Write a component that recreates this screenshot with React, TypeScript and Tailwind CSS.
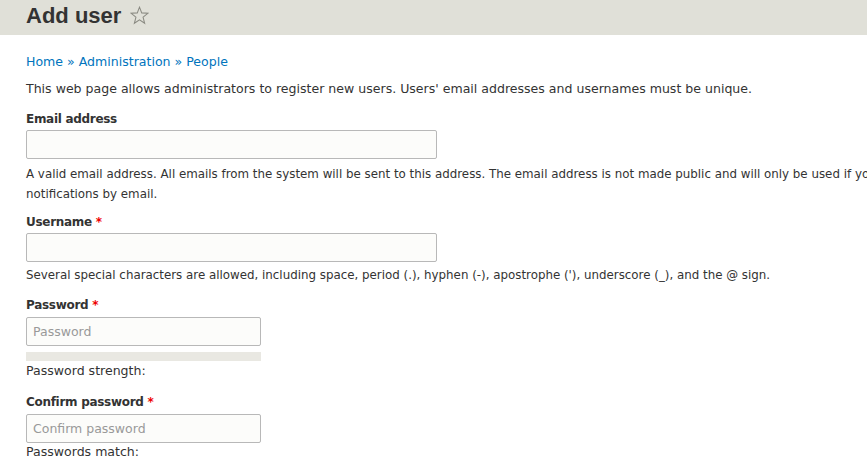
import { Fragment } from 'react'

const font = { fontFamily: '"DejaVu Sans", Verdana, sans-serif' }
const titleFont = { fontFamily: '"Liberation Sans", Arial, sans-serif' }

const Req = () => <span className="ml-[4px] text-[#e00]">*</span>

function TextInput({ width, placeholder }: { width: string; placeholder?: string }) {
    return (
        <input
            type="text"
            placeholder={placeholder}
            className={`${width} h-[29px] rounded-[2px] border border-[#b8b8b8] bg-[#fcfcfa] px-[6px] text-[12.5px] text-[#333] placeholder:text-[#999] outline-none`}
            style={font}
        />
    )
}

function Label({ children }: { children: React.ReactNode }) {
    return <label className="block text-[12px] font-bold leading-[18px] tracking-[-0.3px]">{children}</label>
}

export default function App() {
    return (
        <div className="min-h-screen w-full overflow-hidden bg-white text-[12.55px] text-[#333]" style={font}>
            <div className="flex h-[35px] items-center bg-[#e0e0d8] px-[26px]">
                <h1 className="-mt-[3px] text-[22px] font-bold leading-none text-[#333]" style={titleFont}>Add user</h1>
                <svg className="-mt-[5px] ml-[9px]" width="19" height="19" viewBox="0 0 24 24" fill="none" stroke="#8a8a82" strokeWidth="1.3">
                    <polygon points="12,1.5 14.8,8.7 22.5,9.2 16.5,14.1 18.5,21.8 12,17.5 5.5,21.8 7.5,14.1 1.5,9.2 9.2,8.7" />
                </svg>
            </div>

            <div className="w-[1100px] px-[26px]">
                <nav className="mt-[18px] leading-[18px] text-[#0074bd]">
                    {['Home', 'Administration', 'People'].map((crumb, i) => (
                        <Fragment key={crumb}>
                            {i > 0 && <span> » </span>}
                            <a href="#" className="text-[#0074bd]">{crumb}</a>
                        </Fragment>
                    ))}
                </nav>

                <p className="mt-[9px] leading-[18px]">
                    This web page allows administrators to register new users. Users' email addresses and usernames must be unique.
                </p>

                <div className="mt-[12px]">
                    <Label>Email address</Label>
                    <div className="mt-[2px]"><TextInput width="w-[411px]" /></div>
                    <p className="mt-[5px] text-[11.85px] leading-[20px]">
                        <span className="whitespace-nowrap">
                            A valid email address. All emails from the system will be sent to this address. The email address is not made public and will only be used if you wish to receive a new password or wish to receive certain news or
                        </span>
                        <br />
                        notifications by email.
                    </p>
                </div>

                <div className="mt-[9px]">
                    <Label>Username<Req /></Label>
                    <div className="mt-[2px]"><TextInput width="w-[411px]" /></div>
                    <p className="mt-[3px] text-[11.85px] leading-[20px]">
                        Several special characters are allowed, including space, period (.), hyphen (-), apostrophe ('), underscore (_), and the @ sign.
                    </p>
                </div>

                <div className="mt-[11px]">
                    <Label>Password<Req /></Label>
                    <div className="mt-[3px]"><TextInput width="w-[235px]" placeholder="Password" /></div>
                    <div className="mt-[6px] h-[9px] w-[235px] bg-[#e9e8e2]" />
                    <div className="mt-[1px] leading-[18px]">Password strength:</div>
                </div>

                <div className="mt-[13px]">
                    <Label>Confirm password<Req /></Label>
                    <div className="mt-[3px]"><TextInput width="w-[235px]" placeholder="Confirm password" /></div>
                    <div className="leading-[18px]">Passwords match:</div>
                </div>
            </div>
        </div>
    )
}
